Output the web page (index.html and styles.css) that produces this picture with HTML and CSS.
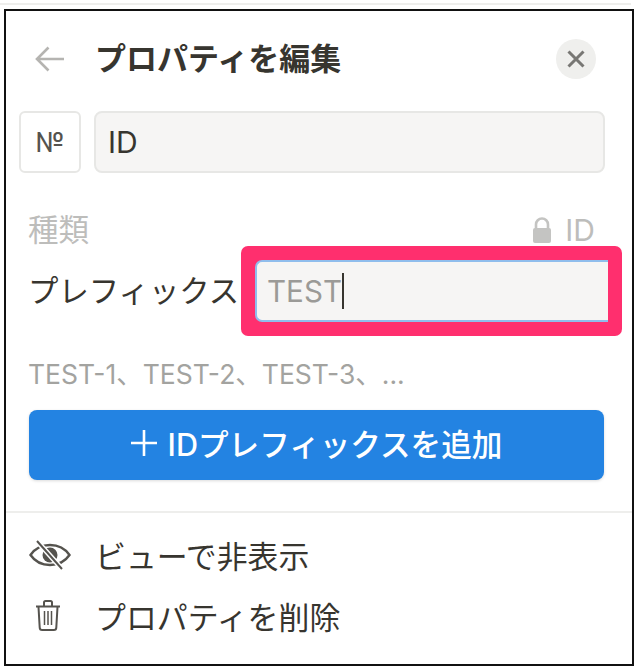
FILE: index.html
```html
<!DOCTYPE html>
<html lang="ja">
<head>
<meta charset="utf-8">
<title>プロパティを編集</title>
<link rel="stylesheet" href="styles.css">
</head>
<body>
<div class="topline"></div>
<div class="panel">
  <div class="header">
    <svg class="back" viewBox="0 0 30 26" width="30" height="26"><path d="M29 13H2M13.5 1.5 2 13l11.5 11.5" fill="none" stroke="#b5b4b1" stroke-width="2.6"/></svg>
    <div class="title">プロパティを編集</div>
    <div class="close"><svg viewBox="0 0 18 18" width="18" height="18"><path d="M1.5 1.5l15 15M16.5 1.5l-15 15" fill="none" stroke="#787774" stroke-width="3"/></svg></div>
  </div>
  <div class="name-row">
    <div class="type-btn">№</div>
    <div class="field name-field">ID</div>
  </div>
  <div class="kind-row">
    <span class="kind-label">種類</span>
    <span class="kind-value">
      <svg viewBox="0 0 20 27" width="20" height="27"><path d="M4 12V7.500a6 6 0 0 1 12 0V12" fill="none" stroke="#c4c4c2" stroke-width="2.600"/><rect x="1" y="11" width="18" height="15" rx="2" fill="#c4c4c2"/></svg>
      <span>ID</span>
    </span>
  </div>
  <div class="prefix-row">
    <span class="prefix-label">プレフィックス</span>
    <div class="highlight">
      <div class="prefix-input"><span class="prefix-text">TEST</span><span class="caret"></span></div>
    </div>
  </div>
  <div class="hint">TEST-1、TEST-2、TEST-3、...</div>
  <div class="add-btn">
    <svg viewBox="0 0 26 26" width="26" height="26"><path d="M13 0v26M0 13h26" stroke="#fff" stroke-width="2.600"/></svg>
    <span>IDプレフィックスを追加</span>
  </div>
  <div class="divider"></div>
  <div class="menu">
    <div class="menu-item">
      <span class="menu-icon"><svg viewBox="0 0 42 30" width="42" height="30"><path d="M1.500 15C6 8.500 13 5 21 5s15 3.500 19.500 10C36 21.500 29 25 21 25S6 21.500 1.500 15z" fill="none" stroke="#55534e" stroke-width="2.400"/><circle cx="21" cy="15" r="7.500" fill="#55534e"/><path d="M8 1l25 28" stroke="#fff" stroke-width="5"/><path d="M8 1l25 28" stroke="#55534e" stroke-width="2"/></svg></span>
      <span>ビューで非表示</span>
    </div>
    <div class="menu-item">
      <span class="menu-icon menu-icon-trash"><svg viewBox="0 0 26 31" width="26" height="31"><path d="M1 6.500h24M9 6V2.500A1.500 1.500 0 0 1 10.500 1h5A1.500 1.500 0 0 1 17 2.500V6M3.500 7l1.200 20.500A2.500 2.500 0 0 0 7.200 30h11.600a2.500 2.500 0 0 0 2.500-2.500L22.500 7" fill="none" stroke="#55534e" stroke-width="2"/><path d="M9.500 11v14M13 11v14M16.500 11v14" stroke="#55534e" stroke-width="1.500"/></svg></span>
      <span>プロパティを削除</span>
    </div>
  </div>
</div>
</body>
</html>
```
FILE: styles.css
```css
* { box-sizing: border-box; }
html, body { margin: 0; padding: 0; background: #fff; }
body {
  width: 637px;
  height: 670px;
  overflow: hidden;
  font-family: Inter, "Noto Sans CJK JP", sans-serif;
  color: #37352f;
  padding: 3px 0 0 0;
}
.topline { width: 631px; height: 2px; background: #eeeeec; margin-bottom: 4px; margin-left: 0; }
.panel {
  width: 630px;
  height: 657px;
  margin-left: 4px;
  border: 2px solid #111;
  display: flex;
  flex-direction: column;
  background: #fff;
}
.header {
  display: flex;
  align-items: center;
  height: 80px;
  margin-top: 8px;
  padding: 0 36px 0 29px;
}
.back { flex: none; margin-right: 30px; }
.title { font-size: 31px; font-weight: 700; flex: 1; line-height: 40px; }
.close {
  width: 40px;
  height: 40px;
  border-radius: 50%;
  background: #efefed;
  display: flex;
  align-items: center;
  justify-content: center;
}
.name-row {
  display: flex;
  gap: 13px;
  height: 62px;
  margin-top: 12px;
  padding-left: 13px;
}
.type-btn {
  width: 62px;
  border: 2px solid #e7e7e5;
  border-radius: 6px;
  display: flex;
  align-items: center;
  justify-content: center;
  font-size: 27px;
  color: #55534e;
  font-weight: 400;
}
.field {
  width: 511px;
  background: #f6f5f4;
  border: 2px solid #e7e7e5;
  border-radius: 8px;
  display: flex;
  align-items: center;
  padding-left: 12px;
  font-size: 30px;
}
.kind-row {
  display: flex;
  justify-content: space-between;
  align-items: center;
  height: 40px;
  margin-top: 37px;
  padding: 0 37px 0 22px;
  color: #bdbdbb;
  font-size: 30.500px;
}
.kind-label { line-height: 40px; }
.kind-value { display: flex; align-items: center; gap: 13px; font-size: 30px; }
.prefix-row {
  display: flex;
  align-items: center;
  height: 90px;
  margin-top: -4px;
  padding-left: 22px;
}
.prefix-label { font-size: 30.400px; width: 213px; white-space: nowrap; padding-bottom: 4px; }
.highlight {
  width: 381px;
  height: 90px;
  background: #ff2f6e;
  border-radius: 7px;
  padding: 14px;
}
.prefix-input {
  height: 62px;
  background: #f6f5f4;
  border: 2px solid #90bdec;
  border-right: 0;
  border-radius: 7px 0 0 7px;
  display: flex;
  align-items: center;
  padding-left: 10px;
  font-size: 29.600px;
}
.prefix-text { color: #9b9a97; }
.caret { width: 2px; height: 36px; background: #37352f; }
.hint {
  font-size: 26.500px;
  color: #a3a3a0;
  padding-left: 22px;
  height: 34px;
  line-height: 34px;
  margin-top: 21px;
}
.add-btn {
  width: 575px;
  height: 70px;
  margin: 19px 0 0 23px;
  padding-bottom: 4px;
  background: #2383e2;
  border-radius: 8px;
  box-shadow: 0 1px 3px rgba(15, 15, 15, 0.15);
  color: #fff;
  font-size: 30.600px;
  font-weight: 500;
  display: flex;
  align-items: center;
  justify-content: center;
  gap: 11px;
}
.divider { height: 2px; background: #eeeeec; margin-top: 31px; }
.menu { display: flex; flex-direction: column; margin-top: 11px; }
.menu-item {
  display: flex;
  align-items: center;
  height: 61px;
  font-size: 30.900px;
  padding-left: 22px;
}
.menu-icon { width: 67px; flex: none; display: flex; justify-content: center; padding-right: 24px; }
.menu-icon-trash { padding-right: 27px; }
```
